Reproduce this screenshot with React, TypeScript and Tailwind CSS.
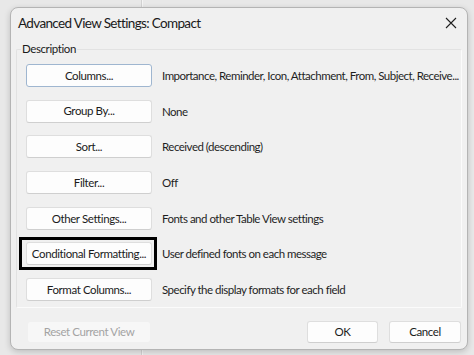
import React from "react";

const rows: { label: string; text: string; focused?: boolean; primary?: boolean }[] = [
  { label: "Columns...", text: "Importance, Reminder, Icon, Attachment, From, Subject, Receive...", primary: true },
  { label: "Group By...", text: "None" },
  { label: "Sort...", text: "Received (descending)" },
  { label: "Filter...", text: "Off" },
  { label: "Other Settings...", text: "Fonts and other Table View settings" },
  { label: "Conditional Formatting...", text: "User defined fonts on each message", focused: true },
  { label: "Format Columns...", text: "Specify the display formats for each field" },
];

function DlgButton({
  label,
  primary,
  disabled,
  className = "",
}: {
  label: string;
  primary?: boolean;
  disabled?: boolean;
  className?: string;
}) {
  const tone = disabled
    ? "bg-[#f7f7f7] border-[#f0f0f0] text-[#a3a3a3]"
    : primary
      ? "bg-[#fdfdfd] border-[#9fb6d0] text-[#1b1b1b]"
      : "bg-[#fdfdfd] border-[#dedede] border-b-[#cfcfcf] text-[#1b1b1b]";
  return (
    <button
      type="button"
      className={`flex items-center justify-center whitespace-nowrap rounded-[3px] border text-[11.5px] leading-none tracking-[-0.4px] ${tone} ${className}`}
    >
      {label}
    </button>
  );
}

function CloseIcon() {
  return (
    <svg width="12" height="12" viewBox="0 0 12 12" fill="none">
      <path d="M1 1 L11 11 M11 1 L1 11" stroke="#1f1f1f" strokeWidth="1.1" />
    </svg>
  );
}

export default function App() {
  return (
    <div
      className="relative h-[355px] w-[474px] overflow-hidden bg-[#e8e8e8]"
      style={{ fontFamily: 'Lato, "Noto Sans", sans-serif' }}
    >
      {/* window behind the dialog */}
      <div className="absolute left-[141px] top-0 h-full w-[2px] border-l border-r border-l-[#d2d2d2] border-r-[#f4f4f4]" />

      <div className="relative ml-[10px] mt-[7px] flex h-[343px] w-[458px] flex-col rounded-[8px] border border-[#b4b4b4] bg-[#f0f0f0] shadow-[0_2px_6px_rgba(0,0,0,0.18)]">
        {/* title bar */}
        <div className="flex h-[29px] items-center justify-between pl-[7px] pr-[10px] pt-[1px]">
          <span className="text-[13.5px] tracking-[-0.65px] text-[#1a1a1a]">Advanced View Settings: Compact</span>
          <CloseIcon />
        </div>

        {/* group box */}
        <div className="relative mx-[5px] mt-[12px] rounded-[2px] border border-[#e2e2e2] border-b-[#fbfbfb] border-r-[#fbfbfb] px-[9px] pb-[6px] pt-[14px]">
          <span className="absolute left-[4px] top-[-9px] bg-[#f0f0f0] px-[1px] text-[11.5px] leading-[16px] tracking-[-0.4px] text-[#1b1b1b]">
            Description
          </span>
          <div className="flex flex-col gap-[12.7px]">
            {rows.map((r) => (
              <div key={r.label} className="flex h-[23px] items-center gap-[10px]">
                <div className="relative h-full w-[126px] shrink-0">
                  {r.focused && (
                    <span className="absolute bottom-[-5px] left-[-7px] right-[-5px] top-[-5px] border-[3px] border-black" />
                  )}
                  <DlgButton label={r.label} primary={r.primary} className="relative h-full w-full" />
                </div>
                <span className="whitespace-nowrap text-[11.5px] tracking-[-0.5px] text-[#1f1f1f]">{r.text}</span>
              </div>
            ))}
          </div>
        </div>

        {/* footer */}
        <div className="mt-[13px] flex items-center pl-[16px] pr-[6px]">
          <DlgButton label="Reset Current View" disabled className="h-[22px] w-[124px]" />
          <div className="ml-auto flex gap-[11px]">
            <DlgButton label="OK" className="h-[22px] w-[71px]" />
            <DlgButton label="Cancel" className="h-[22px] w-[72px]" />
          </div>
        </div>
      </div>
    </div>
  );
}
